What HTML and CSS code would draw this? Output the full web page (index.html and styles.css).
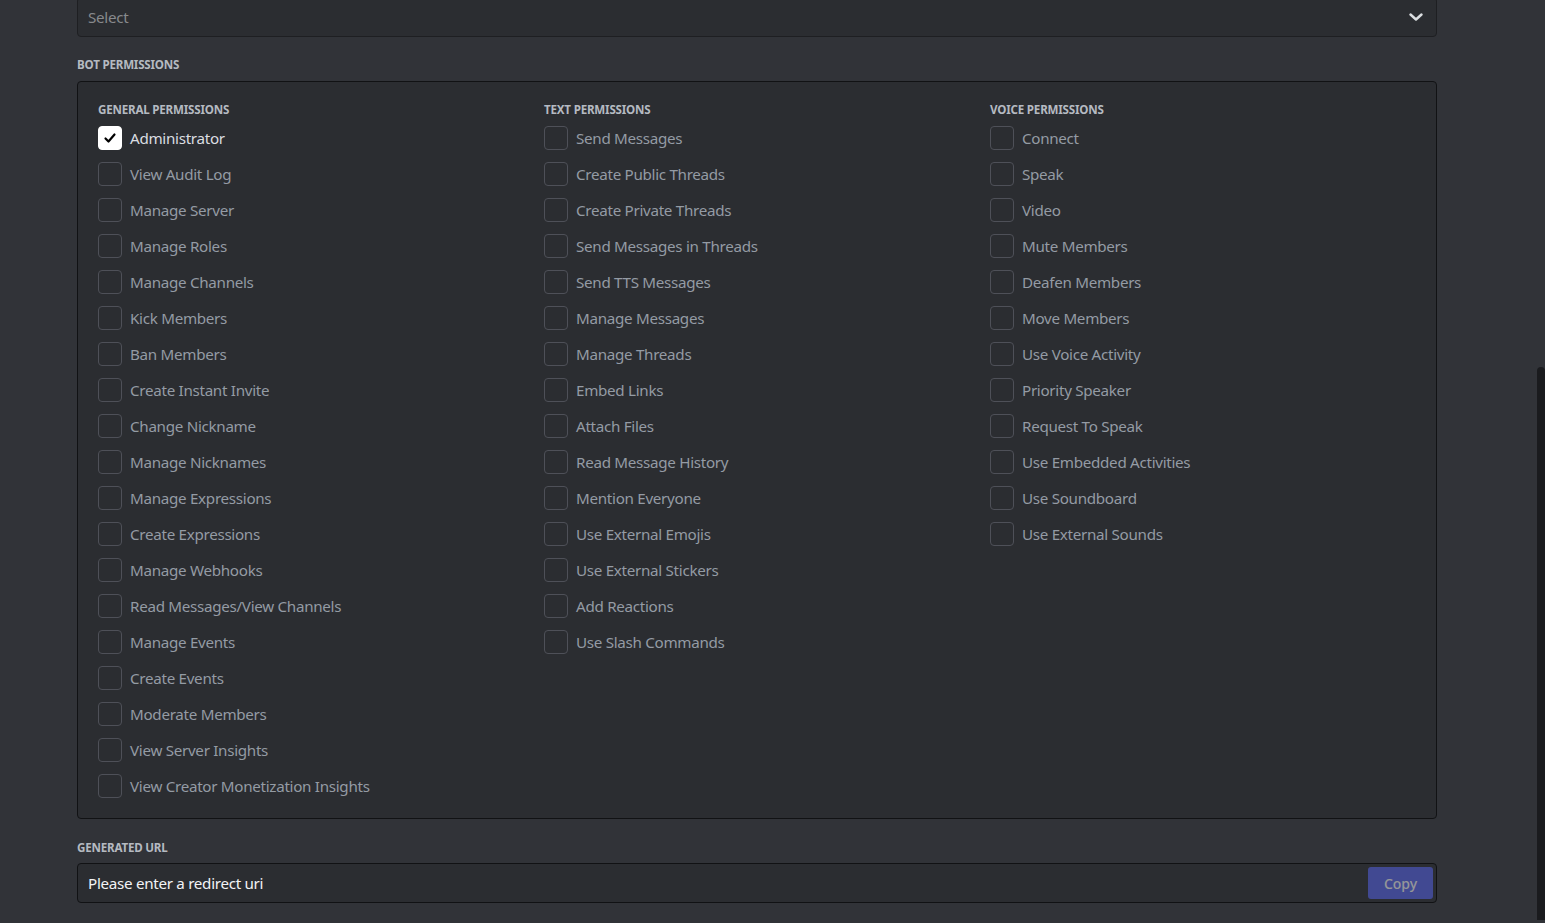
FILE: index.html
```html
<!DOCTYPE html>
<html lang="en">
<head>
<meta charset="utf-8">
<title>Bot Permissions</title>
<link rel="stylesheet" href="styles.css">
</head>
<body>
<div class="page">
  <div class="content">
    <div class="select">
      <span class="select-placeholder">Select</span>
      <svg class="chevron" width="14" height="10" viewBox="0 0 14 10"><path d="M1.5 2.5 L7 7.5 L12.5 2.5" fill="none" stroke="#dbdee1" stroke-width="2.4" stroke-linecap="round" stroke-linejoin="round"/></svg>
    </div>

    <h2 class="section-label">Bot Permissions</h2>
    <div class="perm-box">
      <div class="perm-col">
        <h3 class="col-label">General Permissions</h3>
        <label class="perm checked"><span class="box"><svg width="16" height="16" viewBox="0 0 16 16"><path d="M3.5 8.5 L6.5 11.5 L12.5 4.5" fill="none" stroke="#000" stroke-width="2.2" stroke-linecap="round" stroke-linejoin="round"/></svg></span><span class="text">Administrator</span></label>
        <label class="perm"><span class="box"></span><span class="text">View Audit Log</span></label>
        <label class="perm"><span class="box"></span><span class="text">Manage Server</span></label>
        <label class="perm"><span class="box"></span><span class="text">Manage Roles</span></label>
        <label class="perm"><span class="box"></span><span class="text">Manage Channels</span></label>
        <label class="perm"><span class="box"></span><span class="text">Kick Members</span></label>
        <label class="perm"><span class="box"></span><span class="text">Ban Members</span></label>
        <label class="perm"><span class="box"></span><span class="text">Create Instant Invite</span></label>
        <label class="perm"><span class="box"></span><span class="text">Change Nickname</span></label>
        <label class="perm"><span class="box"></span><span class="text">Manage Nicknames</span></label>
        <label class="perm"><span class="box"></span><span class="text">Manage Expressions</span></label>
        <label class="perm"><span class="box"></span><span class="text">Create Expressions</span></label>
        <label class="perm"><span class="box"></span><span class="text">Manage Webhooks</span></label>
        <label class="perm"><span class="box"></span><span class="text">Read Messages/View Channels</span></label>
        <label class="perm"><span class="box"></span><span class="text">Manage Events</span></label>
        <label class="perm"><span class="box"></span><span class="text">Create Events</span></label>
        <label class="perm"><span class="box"></span><span class="text">Moderate Members</span></label>
        <label class="perm"><span class="box"></span><span class="text">View Server Insights</span></label>
        <label class="perm"><span class="box"></span><span class="text">View Creator Monetization Insights</span></label>
      </div>
      <div class="perm-col">
        <h3 class="col-label">Text Permissions</h3>
        <label class="perm"><span class="box"></span><span class="text">Send Messages</span></label>
        <label class="perm"><span class="box"></span><span class="text">Create Public Threads</span></label>
        <label class="perm"><span class="box"></span><span class="text">Create Private Threads</span></label>
        <label class="perm"><span class="box"></span><span class="text">Send Messages in Threads</span></label>
        <label class="perm"><span class="box"></span><span class="text">Send TTS Messages</span></label>
        <label class="perm"><span class="box"></span><span class="text">Manage Messages</span></label>
        <label class="perm"><span class="box"></span><span class="text">Manage Threads</span></label>
        <label class="perm"><span class="box"></span><span class="text">Embed Links</span></label>
        <label class="perm"><span class="box"></span><span class="text">Attach Files</span></label>
        <label class="perm"><span class="box"></span><span class="text">Read Message History</span></label>
        <label class="perm"><span class="box"></span><span class="text">Mention Everyone</span></label>
        <label class="perm"><span class="box"></span><span class="text">Use External Emojis</span></label>
        <label class="perm"><span class="box"></span><span class="text">Use External Stickers</span></label>
        <label class="perm"><span class="box"></span><span class="text">Add Reactions</span></label>
        <label class="perm"><span class="box"></span><span class="text">Use Slash Commands</span></label>
      </div>
      <div class="perm-col">
        <h3 class="col-label">Voice Permissions</h3>
        <label class="perm"><span class="box"></span><span class="text">Connect</span></label>
        <label class="perm"><span class="box"></span><span class="text">Speak</span></label>
        <label class="perm"><span class="box"></span><span class="text">Video</span></label>
        <label class="perm"><span class="box"></span><span class="text">Mute Members</span></label>
        <label class="perm"><span class="box"></span><span class="text">Deafen Members</span></label>
        <label class="perm"><span class="box"></span><span class="text">Move Members</span></label>
        <label class="perm"><span class="box"></span><span class="text">Use Voice Activity</span></label>
        <label class="perm"><span class="box"></span><span class="text">Priority Speaker</span></label>
        <label class="perm"><span class="box"></span><span class="text">Request To Speak</span></label>
        <label class="perm"><span class="box"></span><span class="text">Use Embedded Activities</span></label>
        <label class="perm"><span class="box"></span><span class="text">Use Soundboard</span></label>
        <label class="perm"><span class="box"></span><span class="text">Use External Sounds</span></label>
      </div>
    </div>

    <h2 class="section-label url-label">Generated URL</h2>
    <div class="url-box">
      <span class="url-text">Please enter a redirect uri</span>
      <button class="copy-btn" disabled>Copy</button>
    </div>
  </div>
  <div class="scroll-thumb"></div>
</div>
</body>
</html>
```

FILE: styles.css
```css
* {
  box-sizing: border-box;
}

html, body {
  margin: 0;
  padding: 0;
  height: 100%;
  overflow: hidden;
}

body {
  background: #313338;
  font-family: "Noto Sans", "Open Sans", sans-serif;
  color: #dbdee1;
}

.page {
  position: relative;
  height: 923px;
}

.content {
  width: 1360px;
  margin-left: 77px;
  margin-top: -3px;
}

.select {
  height: 40px;
  background: #2b2d31;
  border: 1px solid #1e1f22;
  border-radius: 4px;
  display: flex;
  align-items: center;
  justify-content: space-between;
  padding: 0 12px 0 10px;
}

.select-placeholder {
  font-size: 15.2px;
  letter-spacing: -0.3px;
  color: #87898c;
  margin-top: -1px;
}

.chevron {
  display: block;
  margin-right: 1px;
}

.section-label {
  margin: 20px 0 8px;
  font-size: 11.6px;
  line-height: 16px;
  font-weight: 700;
  text-transform: uppercase;
  color: #b5bac1;
  letter-spacing: -0.2px;
}

.url-label {
  margin-top: 21px;
  margin-bottom: 7px;
}

.perm-box {
  background: #2b2d31;
  border: 1px solid #111214;
  border-radius: 4px;
  padding: 20px 0 20px 20px;
  display: grid;
  grid-template-columns: 446px 446px 446px;
  align-items: start;
}

.perm-col {
  display: flex;
  flex-direction: column;
  gap: 12px;
}

.col-label {
  margin: 0 0 -4px;
  font-size: 11.6px;
  line-height: 16px;
  font-weight: 700;
  text-transform: uppercase;
  color: #b5bac1;
  letter-spacing: -0.2px;
}

.perm {
  display: flex;
  align-items: center;
  gap: 8px;
  height: 24px;
}

.box {
  width: 24px;
  height: 24px;
  border: 1px solid #4e5058;
  border-radius: 4px;
  flex: none;
  display: flex;
  align-items: center;
  justify-content: center;
}

.perm.checked .box {
  background: #ffffff;
  border-color: #ffffff;
}

.text {
  font-size: 15.2px;
  letter-spacing: -0.3px;
  color: #949ba4;
  line-height: 20px;
  margin-top: -1px;
}

.perm.checked .text {
  color: #dbdee1;
}

.url-box {
  height: 40px;
  background: #2b2d31;
  border: 1px solid #111214;
  border-radius: 4px;
  display: flex;
  align-items: center;
  justify-content: space-between;
  padding: 0 3px 0 10px;
}

.url-text {
  font-size: 15.2px;
  letter-spacing: -0.3px;
  color: #f2f3f5;
}

.copy-btn {
  width: 65px;
  height: 32px;
  background: #5865f2;
  opacity: 0.5;
  border: none;
  border-radius: 3px;
  color: #ffffff;
  font-family: inherit;
  font-size: 14px;
  font-weight: 500;
}

.scroll-thumb {
  position: absolute;
  right: 0;
  top: 370px;
  bottom: 0;
  width: 8px;
  background: #1a1b1e;
  border-radius: 4px 4px 0 0;
}
```
